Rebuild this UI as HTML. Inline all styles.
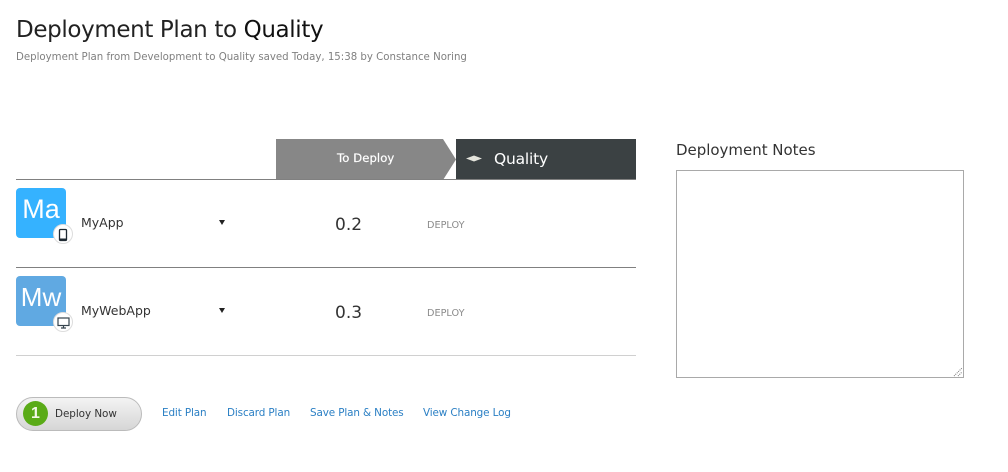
<!DOCTYPE html>
<html><head><meta charset="utf-8">
<style>
html,body{margin:0;padding:0;background:#fff;width:1008px;height:472px;overflow:hidden}
body{position:relative;font-family:"DejaVu Sans","Liberation Sans",sans-serif}
.t{position:absolute;white-space:nowrap;line-height:1}
.a{position:absolute}
.link{color:#2a7fc4;font-size:10.4px;top:408px;letter-spacing:-.12px}
.dep{color:#8a8a8a;font-size:9.7px;left:427px}
.ver{color:#333;font-size:17px;left:335px}
.name{color:#333;font-size:12.5px;left:81px}
.av{position:absolute;left:16px;width:50px;height:50px;border-radius:4px;color:#fff;font-family:"Liberation Sans",sans-serif;text-align:center;line-height:43px}
.badge{position:absolute;left:53px;width:18px;height:18px;border-radius:50%;background:#fff;border:1px solid #ddd}
.tri{position:absolute;left:219px;width:0;height:0;border-left:3px solid transparent;border-right:3px solid transparent;border-top:5px solid #222}
</style></head><body>
<div class="t" style="left:16px;top:19px;font-size:23px;color:#222;letter-spacing:-.37px">Deployment Plan to <span style="color:#111">Quality</span></div>
<div class="t" style="left:16px;top:53px;font-size:10.2px;color:#808080;letter-spacing:0">Deployment Plan from Development to Quality saved Today, 15:38 by Constance Noring</div>

<svg class="a" style="left:276px;top:139px" width="180" height="41"><polygon points="0,0 167,0 180,20.5 167,41 0,41" fill="#878787"/></svg>
<div class="t" style="left:337px;top:153px;font-size:11.6px;color:#fff;letter-spacing:.1px;-webkit-text-stroke:.2px #fff">To Deploy</div>
<div class="a" style="left:456px;top:139px;width:180px;height:41px;background:#3b4143"></div>
<svg class="a" style="left:466px;top:154px" width="18" height="9"><polygon points="0,4.5 8,1.5 16,4.5 8,7.5" fill="#e4e4dc"/></svg>
<div class="t" style="left:494px;top:152px;font-size:15.5px;color:#fff;letter-spacing:-.2px">Quality</div>
<div class="a" style="left:16px;top:179px;width:620px;height:1px;background:#808080"></div>

<div class="av" style="top:188px;background:#35b2ff;font-size:27px">Ma</div>
<div class="badge" style="top:224px"></div>
<svg class="a" style="left:58px;top:228px" width="10" height="14"><rect x="1.5" y="1.5" width="7" height="11" rx="1" fill="#fff" stroke="#1f2a33" stroke-width="1.3"/><rect x="2" y="10.5" width="6" height="2" fill="#1f2a33"/></svg>
<div class="t name" style="top:217px">MyApp</div>
<div class="tri" style="top:220px"></div>
<div class="t ver" style="top:217px">0.2</div>
<div class="t dep" style="top:221px">DEPLOY</div>
<div class="a" style="left:16px;top:267px;width:620px;height:1px;background:#808080"></div>

<div class="av" style="top:276px;background:#60a9e2;font-size:26px">Mw</div>
<div class="badge" style="top:312px"></div>
<svg class="a" style="left:57px;top:317px" width="13" height="12"><rect x="1" y="1" width="11" height="7.5" fill="#fff" stroke="#34424c" stroke-width="1.2"/><path d="M6.5 9v2M4 11h5" stroke="#34424c" stroke-width="1.2" fill="none"/></svg>
<div class="t name" style="top:305px">MyWebApp</div>
<div class="tri" style="top:308px"></div>
<div class="t ver" style="top:305px">0.3</div>
<div class="t dep" style="top:309px">DEPLOY</div>
<div class="a" style="left:16px;top:355px;width:620px;height:1px;background:#d0d0d0"></div>

<div class="a" style="left:16px;top:397px;width:124px;height:32px;border:1px solid #bbb;border-radius:17px;background:linear-gradient(#f3f3f3,#d6d6d6)"></div>
<div class="a" style="left:23px;top:401px;width:25px;height:25px;border-radius:50%;background:#5aab17;color:#f4f8e8;font:bold 16px/25px 'Liberation Sans',sans-serif;text-align:center">1</div>
<div class="t" style="left:55px;top:409px;font-size:10.4px;color:#333;letter-spacing:-.05px">Deploy Now</div>
<div class="t link" style="left:162px">Edit Plan</div>
<div class="t link" style="left:227px">Discard Plan</div>
<div class="t link" style="left:310px">Save Plan &amp; Notes</div>
<div class="t link" style="left:423px">View Change Log</div>

<div class="t" style="left:676px;top:143px;font-size:15px;color:#333;letter-spacing:-.02px">Deployment Notes</div>
<div class="a" style="left:676px;top:170px;width:286px;height:206px;border:1px solid #a9a9a9"></div>
<svg class="a" style="left:953px;top:367px" width="10" height="10"><path d="M1 9L9 1M5 9L9 5" stroke="#777" stroke-width="1" stroke-dasharray="1 1" fill="none"/></svg>
</body></html>
